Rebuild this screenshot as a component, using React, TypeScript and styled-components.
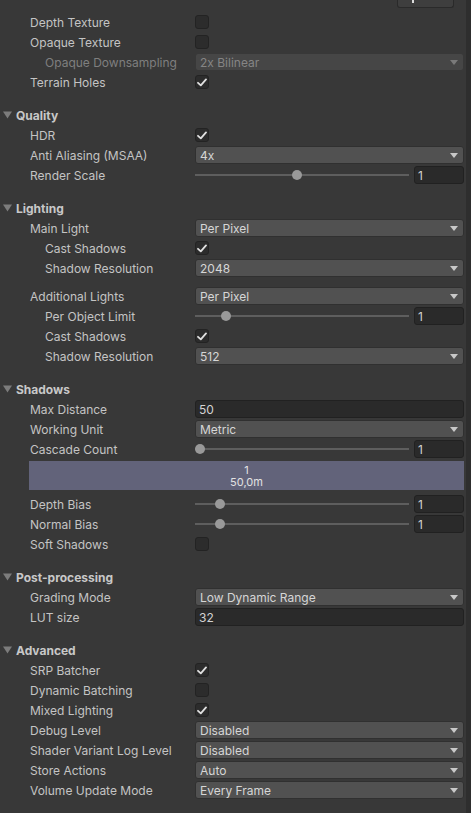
import styled, { createGlobalStyle } from "styled-components";

const GlobalStyle = createGlobalStyle`
  html, body {
    margin: 0;
    padding: 0;
    background-color: #383838;
  }
  body {
    font-family: Inter, "Noto Sans", "Liberation Sans", sans-serif;
    font-size: 12px;
    color: #c4c4c4;
  }
`;

const Page = styled.div`
  display: flex;
  min-height: 813px;
  width: 471px;
  overflow: hidden;
`;

const Inspector = styled.div`
  flex: 1;
  display: flex;
  flex-direction: column;
  padding-right: 2px;
`;

const Gutter = styled.div`
  width: 5px;
  background-color: #2e2e2e;
`;

const TopBar = styled.div`
  height: 12px;
  display: flex;
  justify-content: flex-end;
  align-items: flex-start;
  padding-right: 10px;
`;

const ClippedButton = styled.div`
  width: 55px;
  height: 7px;
  background-color: #3e3e3e;
  border: 1px solid #2a2a2a;
  border-top: none;
  border-radius: 0 0 3px 3px;
  padding-left: 14px;
  box-sizing: content-box;
  width: 41px;
  &::before {
    content: "";
    display: block;
    width: 2px;
    height: 3px;
    background-color: #dcdcdc;
  }
`;

const Section = styled.div<{ $first?: boolean }>`
  display: flex;
  flex-direction: column;
  margin-top: ${(p) => (p.$first ? "0" : "13px")};
`;

const Header = styled.div`
  height: 20px;
  display: flex;
  align-items: center;
  gap: 4px;
  padding-left: 3px;
  font-weight: 700;
  color: #c8c8c8;
`;

const Row = styled.div<{ $gapBefore?: boolean }>`
  height: 20px;
  display: flex;
  align-items: center;
  margin-top: ${(p) => (p.$gapBefore ? "8px" : "0")};
`;

const Label = styled.div<{ $level: number; $disabled?: boolean }>`
  width: 195px;
  flex-shrink: 0;
  box-sizing: border-box;
  padding-left: ${(p) => 15 + p.$level * 15}px;
  color: ${(p) => (p.$disabled ? "#7f7f7f" : "#c4c4c4")};
  white-space: nowrap;
`;

const Field = styled.div`
  flex: 1;
  display: flex;
  align-items: center;
  min-width: 0;
`;

const Box = styled.div`
  width: 14px;
  height: 14px;
  box-sizing: border-box;
  border: 1px solid #232323;
  border-radius: 3px;
  background-color: #2c2c2c;
  display: flex;
  align-items: center;
  justify-content: center;
`;

const Popup = styled.div<{ $disabled?: boolean }>`
  flex: 1;
  height: 18px;
  box-sizing: border-box;
  border: 1px solid ${(p) => (p.$disabled ? "#383838" : "#303030")};
  border-radius: 3px;
  background-color: ${(p) => (p.$disabled ? "#464646" : "#515151")};
  color: ${(p) => (p.$disabled ? "#858585" : "#d6d6d6")};
  display: flex;
  align-items: center;
  padding: 0 5px 0 4px;
`;

const PopupText = styled.span`
  flex: 1;
`;

const Number = styled.div<{ $width?: string }>`
  width: ${(p) => p.$width || "auto"};
  flex: ${(p) => (p.$width ? "none" : "1")};
  height: 18px;
  box-sizing: border-box;
  border: 1px solid #212121;
  border-radius: 3px;
  background-color: #2a2a2a;
  color: #d2d2d2;
  display: flex;
  align-items: center;
  padding-left: 3px;
`;

const SliderWrap = styled.div`
  flex: 1;
  display: flex;
  align-items: center;
  gap: 5px;
`;

const Track = styled.div`
  flex: 1;
  height: 2px;
  background-color: #5e5e5e;
  position: relative;
`;

const Thumb = styled.div`
  position: absolute;
  top: -4px;
  width: 10px;
  height: 10px;
  margin-left: -5px;
  border-radius: 50%;
  background-color: #999999;
`;

const CascadeBar = styled.div`
  margin: 2px 0 4px 29px;
  height: 29px;
  background-color: #62637a;
  color: #e2e2e2;
  font-size: 11px;
  line-height: 12px;
  display: flex;
  flex-direction: column;
  align-items: center;
  justify-content: center;
`;

const Foldout = () => (
  <svg width="9" height="8" viewBox="0 0 9 8">
    <path d="M0 0.5 L9 0.5 L4.5 7.5 Z" fill="#7c7c7c" />
  </svg>
);

const Arrow = ({ disabled }: { disabled?: boolean }) => (
  <svg width="8" height="5" viewBox="0 0 8 5">
    <path d="M0 0 L8 0 L4 5 Z" fill={disabled ? "#7a7a7a" : "#c8c8c8"} />
  </svg>
);

const Check = () => (
  <svg width="10" height="9" viewBox="0 0 10 9">
    <path
      d="M1 4.8 L3.8 7.4 L9 1.4"
      fill="none"
      stroke="#e0e0e0"
      strokeWidth="1.8"
      strokeLinecap="round"
      strokeLinejoin="round"
    />
  </svg>
);

type FieldDef =
  | { kind: "toggle"; on: boolean }
  | { kind: "popup"; value: string; disabled?: boolean }
  | { kind: "text"; value: string }
  | { kind: "slider"; value: number; min: number; max: number };

interface RowDef {
  label: string;
  level?: number;
  field: FieldDef;
  gapBefore?: boolean;
  disabled?: boolean;
  cascade?: boolean;
}

interface SectionDef {
  title?: string;
  rows: RowDef[];
}

const renderField = (f: FieldDef) => {
  switch (f.kind) {
    case "toggle":
      return <Box>{f.on && <Check />}</Box>;
    case "popup":
      return (
        <Popup $disabled={f.disabled}>
          <PopupText>{f.value}</PopupText>
          <Arrow disabled={f.disabled} />
        </Popup>
      );
    case "text":
      return <Number>{f.value}</Number>;
    case "slider": {
      const t = (f.value - f.min) / (f.max - f.min);
      return (
        <SliderWrap>
          <Track>
            <Thumb style={{ left: `calc(5px + ${t} * (100% - 10px))` }} />
          </Track>
          <Number $width="50px">{f.value}</Number>
        </SliderWrap>
      );
    }
  }
};

const sections: SectionDef[] = [
  {
    rows: [
      { label: "Depth Texture", field: { kind: "toggle", on: false } },
      { label: "Opaque Texture", field: { kind: "toggle", on: false } },
      {
        label: "Opaque Downsampling",
        level: 2,
        disabled: true,
        field: { kind: "popup", value: "2x Bilinear", disabled: true },
      },
      { label: "Terrain Holes", field: { kind: "toggle", on: true } },
    ],
  },
  {
    title: "Quality",
    rows: [
      { label: "HDR", field: { kind: "toggle", on: true } },
      { label: "Anti Aliasing (MSAA)", field: { kind: "popup", value: "4x" } },
      { label: "Render Scale", field: { kind: "slider", value: 1, min: 0.1, max: 2 } },
    ],
  },
  {
    title: "Lighting",
    rows: [
      { label: "Main Light", field: { kind: "popup", value: "Per Pixel" } },
      { label: "Cast Shadows", level: 2, field: { kind: "toggle", on: true } },
      { label: "Shadow Resolution", level: 2, field: { kind: "popup", value: "2048" } },
      { label: "Additional Lights", gapBefore: true, field: { kind: "popup", value: "Per Pixel" } },
      { label: "Per Object Limit", level: 2, field: { kind: "slider", value: 1, min: 0, max: 8 } },
      { label: "Cast Shadows", level: 2, field: { kind: "toggle", on: true } },
      { label: "Shadow Resolution", level: 2, field: { kind: "popup", value: "512" } },
    ],
  },
  {
    title: "Shadows",
    rows: [
      { label: "Max Distance", field: { kind: "text", value: "50" } },
      { label: "Working Unit", field: { kind: "popup", value: "Metric" } },
      {
        label: "Cascade Count",
        cascade: true,
        field: { kind: "slider", value: 1, min: 1, max: 4 },
      },
      { label: "Depth Bias", field: { kind: "slider", value: 1, min: 0, max: 10 } },
      { label: "Normal Bias", field: { kind: "slider", value: 1, min: 0, max: 10 } },
      { label: "Soft Shadows", field: { kind: "toggle", on: false } },
    ],
  },
  {
    title: "Post-processing",
    rows: [
      { label: "Grading Mode", field: { kind: "popup", value: "Low Dynamic Range" } },
      { label: "LUT size", field: { kind: "text", value: "32" } },
    ],
  },
  {
    title: "Advanced",
    rows: [
      { label: "SRP Batcher", field: { kind: "toggle", on: true } },
      { label: "Dynamic Batching", field: { kind: "toggle", on: false } },
      { label: "Mixed Lighting", field: { kind: "toggle", on: true } },
      { label: "Debug Level", field: { kind: "popup", value: "Disabled" } },
      { label: "Shader Variant Log Level", field: { kind: "popup", value: "Disabled" } },
      { label: "Store Actions", field: { kind: "popup", value: "Auto" } },
      { label: "Volume Update Mode", field: { kind: "popup", value: "Every Frame" } },
    ],
  },
];

const App = () => {
  return (
    <>
      <GlobalStyle />
      <Page>
        <Inspector>
          <TopBar>
            <ClippedButton />
          </TopBar>
          {sections.map((s, i) => (
            <Section key={i} $first={!s.title}>
              {s.title && (
                <Header>
                  <Foldout />
                  {s.title}
                </Header>
              )}
              {s.rows.map((r, j) => (
                <div key={j}>
                  <Row $gapBefore={r.gapBefore}>
                    <Label $level={r.level || 1} $disabled={r.disabled}>
                      {r.label}
                    </Label>
                    <Field>{renderField(r.field)}</Field>
                  </Row>
                  {r.cascade && (
                    <CascadeBar>
                      <span>1</span>
                      <span>50,0m</span>
                    </CascadeBar>
                  )}
                </div>
              ))}
            </Section>
          ))}
        </Inspector>
        <Gutter />
      </Page>
    </>
  );
};

export default App;
